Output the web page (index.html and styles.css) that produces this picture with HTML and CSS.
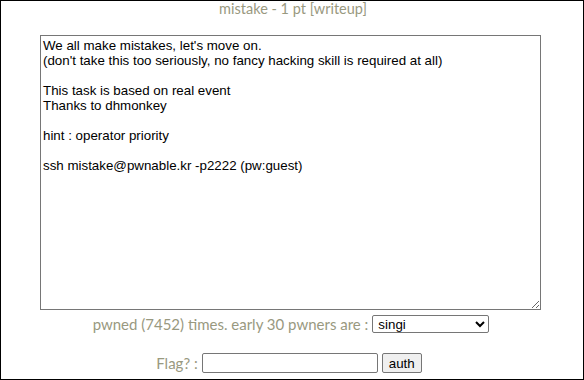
FILE: index.html
```html
<!DOCTYPE html>
<html>
<head>
<meta charset="utf-8">
<link rel="stylesheet" href="styles.css">
</head>
<body>
<div class="page">
  <div class="title">mistake - 1 pt [writeup]</div>
  <textarea class="desc">We all make mistakes, let's move on.
(don't take this too seriously, no fancy hacking skill is required at all)

This task is based on real event
Thanks to dhmonkey

hint : operator priority

ssh mistake@pwnable.kr -p2222 (pw:guest)</textarea>
  <div class="pwned-row">
    <span class="label">pwned (7452) times. early 30 pwners are :</span>
    <select class="pwners"><option>singi</option></select>
  </div>
  <form class="flag-row">
    <span class="label">Flag? :</span>
    <input class="flag-input" type="text">
    <button class="auth" type="button">auth</button>
  </form>
</div>
</body>
</html>
```

FILE: styles.css
```css
html, body {
  margin: 0;
  padding: 0;
  background: #fff;
}

.page {
  width: 584px;
  height: 380px;
  box-sizing: border-box;
  border: 1px solid #000;
  display: flex;
  flex-direction: column;
  align-items: center;
  font-family: Lato, "Open Sans", sans-serif;
  color: #99997f;
}

.title {
  font-size: 14.5px;
  line-height: 15px;
  margin-top: 0;
  margin-left: 2px;
}

.desc {
  display: block;
  align-self: flex-start;
  margin-top: 19px;
  margin-left: 39px;
  width: 501px;
  height: 275px;
  box-sizing: border-box;
  border: 1px solid #767676;
  padding: 2px;
  font-family: "Liberation Sans", Arial, sans-serif;
  font-size: 13.333px;
  line-height: 15px;
  color: #000;
  resize: both;
}

.pwned-row {
  display: flex;
  align-items: center;
  margin-top: 5px;
  margin-left: -2px;
  height: 18px;
  gap: 4px;
}

.label {
  font-size: 15px;
}

.pwners {
  width: 117px;
  height: 18px;
  box-sizing: border-box;
  border: 1px solid #767676;
  border-radius: 2px;
  font-family: "Liberation Sans", Arial, sans-serif;
  font-size: 13.333px;
  color: #000;
  background: #fff;
  padding: 0 0 0 1px;
}

.flag-row {
  display: flex;
  align-items: center;
  margin: 20px 0 0 -6px;
  height: 20px;
  gap: 4px;
}

.flag-input {
  width: 176px;
  height: 20px;
  box-sizing: border-box;
  border: 1px solid #767676;
  border-radius: 2px;
  padding: 1px 2px;
  margin: 0;
}

.auth {
  width: 40px;
  height: 20px;
  box-sizing: border-box;
  border: 1px solid #767676;
  border-radius: 2px;
  background: #efefef;
  font-family: "Liberation Sans", Arial, sans-serif;
  font-size: 13.333px;
  color: #000;
  padding: 0;
  margin: 0;
}
```
